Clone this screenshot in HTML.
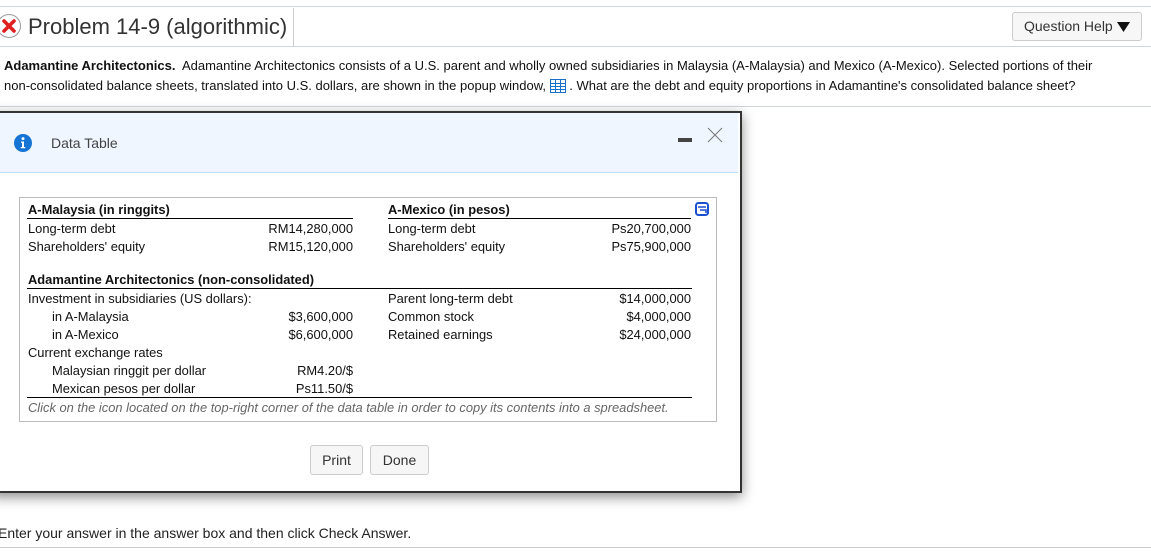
<!DOCTYPE html>
<html><head><style>
body{margin:0;width:1151px;height:554px;overflow:hidden;background:#fff;font-family:"Liberation Sans",Arial,sans-serif;color:#222;position:relative}
.a{position:absolute;white-space:nowrap}
.t{font-size:12.9px;color:#111}
.r{text-align:right}
.hl{position:absolute;height:1px;background:#000}
</style></head><body>
<div class="hl" style="left:0;top:6px;width:1151px;background:#d0d4dc"></div>
<div class="hl" style="left:0;top:46px;width:1151px;background:#d0d4dc"></div>
<div style="position:absolute;left:293px;top:8px;width:1px;height:38px;background:#ccc"></div>
<svg class="a" style="left:-4px;top:13px" width="26" height="26" viewBox="0 0 26 26"><circle cx="13" cy="13" r="11.5" fill="#fff" stroke="#999" stroke-width="1"/><path d="M8 8L18 18M18 8L8 18" stroke="#e02020" stroke-width="3.6" stroke-linecap="round"/></svg>
<div class="a" style="left:28px;top:14px;font-size:22px;color:#333">Problem 14-9 (algorithmic)</div>
<div class="a" style="left:1012px;top:12px;width:130px;height:29px;border:1px solid #ccc;border-radius:3px;background:#f7f7f7;box-sizing:border-box;font-size:14px;color:#333;line-height:27px;padding-left:11px">Question Help <svg width="13" height="10" viewBox="0 0 13 10" style="vertical-align:-1px"><path d="M0 0H13L6.5 10Z" fill="#111"/></svg></div>
<div class="a t" style="left:4px;top:58px;font-size:13px"><b>Adamantine Architectonics.</b>&nbsp; Adamantine Architectonics consists of a U.S. parent and wholly owned subsidiaries in Malaysia (A-Malaysia) and Mexico (A-Mexico). Selected portions of their</div>
<div class="a t" style="left:4px;top:78px;font-size:13px">non-consolidated balance sheets, translated into U.S. dollars, are shown in the popup window, <svg width="16" height="14" style="vertical-align:-3px" viewBox="0 0 16 14"><rect x="0.5" y="0.5" width="15" height="13" fill="#fff" stroke="#1a6fc9"/><path d="M0 4.5H16M0 7.5H16M0 10.5H16M5.5 0V14M10.5 0V14" stroke="#1a6fc9"/></svg> . What are the debt and equity proportions in Adamantine's consolidated balance sheet?</div>
<div class="hl" style="left:0;top:106px;width:1151px;background:#d0d4dc"></div>

<div style="position:absolute;left:-10px;top:111px;width:748px;height:378px;border:2px solid #333;background:#fff;box-shadow:0 4px 12px rgba(0,0,0,.45)"></div>
<div style="position:absolute;left:0;top:113px;width:738px;height:59px;background:#f0f6ff;border-bottom:1px solid #bcdcf8"></div>
<svg class="a" style="left:14px;top:134px" width="18" height="18" viewBox="0 0 18 18"><circle cx="9" cy="9" r="9" fill="#1574d4"/><circle cx="9" cy="4.6" r="1.5" fill="#fff"/><path d="M7 7.5H10V13H11.3V14.3H6.7V13H8V8.8H7Z" fill="#fff"/></svg>
<div class="a" style="left:51px;top:135px;font-size:14px;color:#444">Data Table</div>
<div class="a" style="left:678px;top:138px;width:14px;height:4px;background:#444"></div>
<svg class="a" style="left:707px;top:127px" width="16" height="16" viewBox="0 0 16 16"><path d="M1 1L15 15M15 1L1 15" stroke="#777" stroke-width="1"/></svg>

<div style="position:absolute;left:19px;top:197px;width:698px;height:225px;border:1px solid #bbb;box-sizing:border-box"></div>
<svg class="a" style="left:695px;top:202px" width="14" height="14" viewBox="0 0 14 14"><rect x="1" y="1" width="12" height="12" rx="2.5" fill="#fff" stroke="#1a4fcf" stroke-width="2"/><path d="M3 5H11M5 8H11V11" stroke="#1a4fcf" stroke-width="1.5" fill="none"/></svg>

<div class="a t" style="left:28px;top:202px"><b>A-Malaysia (in ringgits)</b></div>
<div class="a t" style="left:388px;top:202px"><b>A-Mexico (in pesos)</b></div>
<div class="hl" style="left:27px;top:218px;width:326px"></div>
<div class="hl" style="left:388px;top:218px;width:303px"></div>
<div class="a t" style="left:28px;top:221px">Long-term debt</div>
<div class="a t r" style="left:233px;top:221px;width:120px">RM14,280,000</div>
<div class="a t" style="left:388px;top:221px">Long-term debt</div>
<div class="a t r" style="left:571px;top:221px;width:120px">Ps20,700,000</div>
<div class="a t" style="left:28px;top:239px">Shareholders' equity</div>
<div class="a t r" style="left:233px;top:239px;width:120px">RM15,120,000</div>
<div class="a t" style="left:388px;top:239px">Shareholders' equity</div>
<div class="a t r" style="left:571px;top:239px;width:120px">Ps75,900,000</div>

<div class="a t" style="left:28px;top:272px"><b>Adamantine Architectonics (non-consolidated)</b></div>
<div class="hl" style="left:27px;top:288px;width:665px"></div>
<div class="a t" style="left:28px;top:291px">Investment in subsidiaries (US dollars):</div>
<div class="a t" style="left:388px;top:291px">Parent long-term debt</div>
<div class="a t r" style="left:571px;top:291px;width:120px">$14,000,000</div>
<div class="a t" style="left:52px;top:309px">in A-Malaysia</div>
<div class="a t r" style="left:233px;top:309px;width:120px">$3,600,000</div>
<div class="a t" style="left:388px;top:309px">Common stock</div>
<div class="a t r" style="left:571px;top:309px;width:120px">$4,000,000</div>
<div class="a t" style="left:52px;top:327px">in A-Mexico</div>
<div class="a t r" style="left:233px;top:327px;width:120px">$6,600,000</div>
<div class="a t" style="left:388px;top:327px">Retained earnings</div>
<div class="a t r" style="left:571px;top:327px;width:120px">$24,000,000</div>
<div class="a t" style="left:28px;top:345px">Current exchange rates</div>
<div class="a t" style="left:52px;top:363px">Malaysian ringgit per dollar</div>
<div class="a t r" style="left:233px;top:363px;width:120px">RM4.20/$</div>
<div class="a t" style="left:52px;top:381px">Mexican pesos per dollar</div>
<div class="a t r" style="left:233px;top:381px;width:120px">Ps11.50/$</div>
<div class="hl" style="left:27px;top:397px;width:665px"></div>
<div class="a" style="left:28px;top:400px;font-size:12.9px;font-style:italic;color:#666">Click on the icon located on the top-right corner of the data table in order to copy its contents into a spreadsheet.</div>

<div class="a" style="left:310px;top:445px;width:53px;height:30px;border:1px solid #ccc;border-radius:3px;background:#f6f6f6;box-sizing:border-box;text-align:center;line-height:28px;font-size:14px;color:#333">Print</div>
<div class="a" style="left:370px;top:445px;width:59px;height:30px;border:1px solid #ccc;border-radius:3px;background:#f6f6f6;box-sizing:border-box;text-align:center;line-height:28px;font-size:14px;color:#333">Done</div>

<div class="a" style="left:-2px;top:525px;font-size:14px;color:#222">Enter your answer in the answer box and then click Check Answer.</div>
<div class="hl" style="left:0;top:547px;width:1151px;background:#ccc"></div>
</body></html>
